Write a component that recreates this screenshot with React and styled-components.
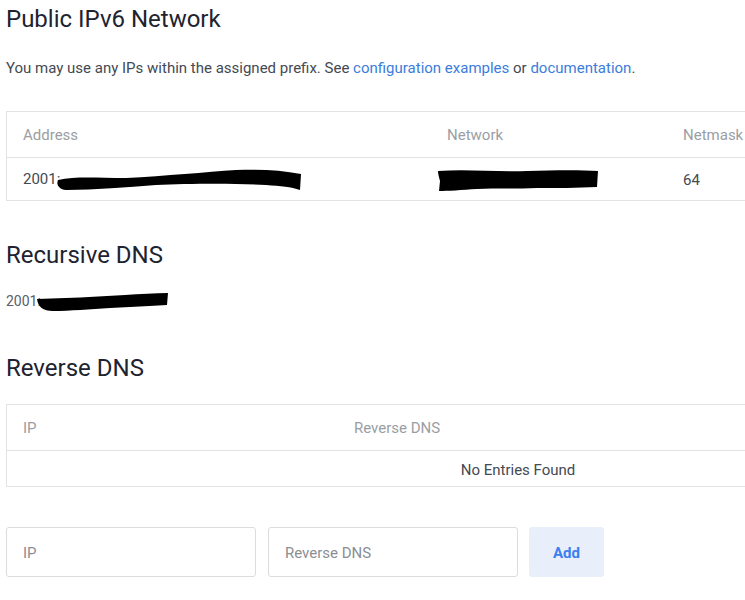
import React from "react";
import styled, { createGlobalStyle } from "styled-components";

const GlobalStyle = createGlobalStyle`
  body {
    margin: 0;
    background: #ffffff;
    font-family: Roboto, "Liberation Sans", sans-serif;
    overflow: hidden;
  }
`;

const Page = styled.div`
  display: flex;
  flex-direction: column;
  padding: 4px 0 0 6px;
  color: #444a52;
`;

const Heading = styled.h2`
  margin: ${(p) => p.$top || 0}px 0 0 0;
  font-size: 24px;
  font-weight: 400;
  line-height: 30px;
  color: #1e2330;
`;

const Intro = styled.p`
  margin: 24px 0 0 0;
  font-size: 15px;
  line-height: 20px;
  color: #444a52;
`;

const Link = styled.a`
  color: #3b7ddc;
  text-decoration: none;
`;

const TableWrap = styled.div`
  margin-top: ${(p) => p.$top}px;
  overflow: hidden;
`;

const Table = styled.table`
  width: 1024px;
  border-collapse: collapse;
  border: 1px solid #e3e3e3;
  font-size: 15px;
  table-layout: fixed;
`;

const Th = styled.th`
  width: ${(p) => (p.$w ? `${p.$w}px` : "auto")};
  height: 44px;
  padding: 1px 16px 0;
  text-align: left;
  font-weight: 400;
  color: #9a9ea3;
  border-bottom: 1px solid #e3e3e3;
`;

const Td = styled.td`
  height: ${(p) => p.$h || 43}px;
  padding: 2px 16px 0;
  box-sizing: border-box;
  color: #444a52;
  text-align: ${(p) => (p.$center ? "center" : "left")};
  white-space: nowrap;
`;

const Redacted = styled.svg`
  display: inline-block;
  vertical-align: middle;
  margin-left: ${(p) => p.$shift || 0}px;
`;

const DnsLine = styled.div`
  margin-top: 21px;
  font-size: 14px;
  line-height: 20px;
  color: #5a6068;
  white-space: nowrap;
`;

const Form = styled.form`
  display: flex;
  gap: 12px;
  margin-top: 40px;
`;

const Input = styled.input`
  width: 250px;
  height: 50px;
  box-sizing: border-box;
  padding: 2px 16px 0;
  border: 1px solid #dcdcdc;
  border-radius: 3px;
  font-family: inherit;
  font-size: 15px;
  color: #444a52;
  &::placeholder {
    color: #8a8e93;
  }
`;

const AddButton = styled.button`
  width: 75px;
  height: 50px;
  margin-left: -1px;
  padding-top: 2px;
  border: none;
  border-radius: 3px;
  background: #e8eefa;
  color: #3b7ff0;
  font-family: inherit;
  font-size: 15px;
  font-weight: 700;
`;

function Scribble({ width, height, d, shift }) {
  return (
    <Redacted width={width} height={height} viewBox={`0 0 ${width} ${height}`} $shift={shift}>
      <path d={d} fill="#000" />
    </Redacted>
  );
}

export default function App() {
  return (
    <>
      <GlobalStyle />
      <Page>
        <Heading>Public IPv6 Network</Heading>
        <Intro>
          You may use any IPs within the assigned prefix. See{" "}
          <Link href="#">configuration examples</Link> or{" "}
          <Link href="#">documentation</Link>.
        </Intro>

        <TableWrap $top={33}>
          <Table>
            <thead>
              <tr>
                <Th $w={392}>Address</Th>
                <Th $w={204}>Network</Th>
                <Th>Netmask</Th>
              </tr>
            </thead>
            <tbody>
              <tr>
                <Td>
                  2001:
                  <Scribble
                    width={246}
                    height={24}
                    shift={-4}
                    d="M2 12 C20 8 40 10 70 10 C110 8 150 4 180 2 C205 1 225 2 245 6 L244 22 C235 19 225 18 210 17 C170 15 130 16 100 17 C70 19 40 22 10 22 C3 21 0 17 2 12 Z"
                  />
                </Td>
                <Td>
                  <Scribble
                    width={162}
                    height={22}
                    shift={-10}
                    d="M1 2 C30 0 60 3 90 2 C120 1 145 1 161 2 L160 18 C140 19 120 19 100 19 C80 20 60 19 40 20 C25 21 10 22 2 22 L3 12 C2 8 1 5 1 2 Z"
                  />
                </Td>
                <Td>64</Td>
              </tr>
            </tbody>
          </Table>
        </TableWrap>

        <Heading $top={39}>Recursive DNS</Heading>
        <DnsLine>
          2001:
          <Scribble
            width={134}
            height={20}
            shift={-6}
            d="M2 7 C30 6 60 5 90 3 C105 2 120 1 133 1 L132 13 C115 14 95 15 75 16 C55 17 35 19 18 19 C8 19 3 15 2 7 Z"
          />
        </DnsLine>

        <Heading $top={41}>Reverse DNS</Heading>

        <TableWrap $top={21}>
          <Table>
            <thead>
              <tr>
                <Th $w={299}>IP</Th>
                <Th>Reverse DNS</Th>
              </tr>
            </thead>
            <tbody>
              <tr>
                <Td colSpan={2} $center $h={36}>
                  No Entries Found
                </Td>
              </tr>
            </tbody>
          </Table>
        </TableWrap>

        <Form onSubmit={(e) => e.preventDefault()}>
          <Input placeholder="IP" />
          <Input placeholder="Reverse DNS" />
          <AddButton type="submit">Add</AddButton>
        </Form>
      </Page>
    </>
  );
}
